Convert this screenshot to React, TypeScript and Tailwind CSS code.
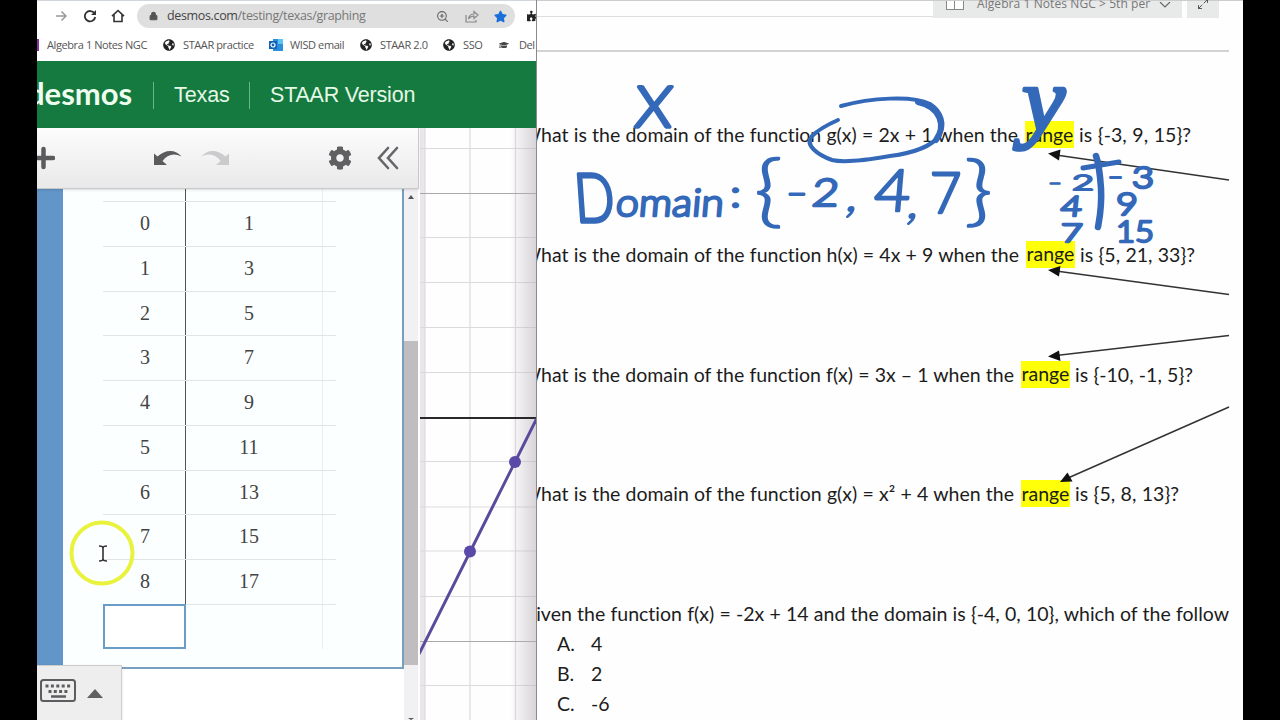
import type { ReactNode } from 'react'
import { Lock, Maximize2, ZoomIn } from 'lucide-react'
import { FaCog, FaGraduationCap, FaGlobeAmericas, FaPuzzlePiece, FaStar } from 'react-icons/fa'

const rows = [
  [0, 1],
  [1, 3],
  [2, 5],
  [3, 7],
  [4, 9],
  [5, 11],
  [6, 13],
  [7, 15],
  [8, 17],
]

interface Question {
  fn: ReactNode
  range: string
  before: string
  after: string
}

const questions: Question[] = [
  { fn: 'g(x) = 2x + 1', range: '{-3, 9, 15}?', before: 'w-[497px]', after: 'w-[112px]' },
  { fn: 'h(x) = 4x + 9', range: '{5, 21, 33}?', before: 'w-[498px]', after: 'w-[115px]' },
  { fn: 'f(x) = 3x – 1', range: '{-10, -1, 5}?', before: 'w-[493px]', after: 'w-[118px]' },
  { fn: 'g(x) = x² + 4', range: '{5, 8, 13}?', before: 'w-[493px]', after: 'w-[104px]' },
]

const answers = [
  ['A.', '4'],
  ['B.', '2'],
  ['C.', '-6'],
]

function BrowserBar() {
  return (
    <div className="h-[61px] shrink-0 border-t border-gray-300 bg-white font-['Open_Sans',sans-serif]">
      <div className="flex h-[30px] items-center">
        <svg className="ml-[18px] h-3 w-3 shrink-0" viewBox="0 0 12 12" fill="none" stroke="#999" strokeWidth="1.500">
          <path d="M1 6h10M6.500 1.500 11 6l-4.500 4.500" />
        </svg>
        <svg className="ml-4 h-[14px] w-[14px] shrink-0" viewBox="0 0 14 14" fill="none" stroke="#333" strokeWidth="1.800">
          <path d="M11.500 4.500A5.200 5.200 0 1 0 12.200 8" />
          <path d="M13 1v5H8z" fill="#333" stroke="none" />
        </svg>
        <svg className="ml-[14px] h-[14px] w-[14px] shrink-0" viewBox="0 0 14 14" fill="none" stroke="#333" strokeWidth="1.600">
          <path d="M1 7.200 7 1.500l6 5.700M3 6v6.500h8V6" />
        </svg>
        <div className="ml-3 flex h-6 w-[378px] shrink-0 items-center rounded-full bg-[#dfdfdf] pl-3">
          <Lock className="h-[10px] w-[9px] shrink-0 fill-[#555] text-[#555]" strokeWidth={3} />
          <span className="ml-[9px] w-[269px] shrink-0 text-[12.5px] tracking-[-0.350px] whitespace-nowrap text-[#777]">
            <span className="text-[#444]">desmos.com</span>/testing/texas/graphing
          </span>
          <ZoomIn className="h-[13px] w-[13px] shrink-0 text-[#666]" />
          <svg className="ml-4 h-[13px] w-[14px] shrink-0" viewBox="0 0 14 13" fill="none" stroke="#888" strokeWidth="1.200">
            <path d="M1 5v7h10v-2" />
            <path d="M3.500 9C4 5.500 6 4 9 4V1.500L13 5 9 8.500V6C7 6 5 7 3.500 9z" />
          </svg>
          <FaStar className="ml-[15px] h-[13px] w-[13px] shrink-0 text-[#1a6fd8]" />
        </div>
        <FaPuzzlePiece className="ml-3 h-3 w-3 shrink-0 text-[#222]" />
      </div>
      <div className="flex h-[28px] items-center text-[11px] tracking-[-0.400px] whitespace-nowrap text-[#555]">
        <span className="h-3 w-[2px] shrink-0 bg-[#8a2fa0]" />
        <span className="w-[124px] shrink-0 pl-2">Algebra 1 Notes NGC</span>
        <FaGlobeAmericas className="h-3 w-3 shrink-0 text-[#222]" />
        <span className="w-[94px] shrink-0 pl-2">STAAR practice</span>
        <svg className="h-[14px] w-[14px] shrink-0" viewBox="0 0 14 14">
          <rect x="4" y="1" width="10" height="12" fill="#2b8fdd" />
          <rect x="9" y="1" width="5" height="5" fill="#5cc3f5" />
          <rect x="0" y="3" width="8" height="8" fill="#0f62b5" />
          <circle cx="4" cy="7" r="2" fill="none" stroke="#fff" strokeWidth="1.200" />
        </svg>
        <span className="w-[77px] shrink-0 pl-[7px]">WISD email</span>
        <FaGlobeAmericas className="h-3 w-3 shrink-0 text-[#222]" />
        <span className="w-[71px] shrink-0 pl-2">STAAR 2.0</span>
        <FaGlobeAmericas className="h-3 w-3 shrink-0 text-[#222]" />
        <span className="w-[44px] shrink-0 pl-2">SSO</span>
        <FaGraduationCap className="h-[10px] w-[10px] shrink-0 text-[#444]" />
        <span className="pl-[10px]">Del</span>
      </div>
    </div>
  )
}

function DesmosHeader() {
  return (
    <div className="flex h-[67px] shrink-0 items-center bg-[#157a40] pt-px font-['Liberation_Sans',Arial,sans-serif] text-[21.500px] tracking-[-0.100px] whitespace-nowrap text-[#e6f8e6]">
      <span className="-mt-1 -ml-[10px] w-[106px] font-['Lato',sans-serif] text-[31px] font-bold tracking-normal text-[#effdef]">desmos</span>
      <span className="ml-5 h-[27px] w-px bg-[#6fb487]" />
      <span className="ml-5 w-[75px]">Texas</span>
      <span className="h-[27px] w-px bg-[#6fb487]" />
      <span className="ml-5 tracking-[-0.200px]">STAAR Version</span>
    </div>
  )
}

function Toolbar() {
  return (
    <div className="relative z-10 flex h-[61px] w-[382px] shrink-0 items-center border-r border-b border-[#c9c9c9] bg-linear-to-b from-[#fcfcfc] to-[#e9e9ea] shadow-sm">
      <svg className="h-6 w-[18px]" viewBox="0 0 18 24" stroke="#5b5b5e" strokeWidth="4.500" strokeLinecap="round">
        <path d="M6.500 3v18M-2 12h18" />
      </svg>
      <svg className="ml-[98px] h-4 w-[29px]" viewBox="0 0 29 16" fill="#5b5b5e">
        <path d="M1 15V3.500l3.500 3C12-1 23-1 28.500 6.500 21 2.500 14 4.500 9.500 11L14 15z" />
      </svg>
      <svg className="ml-[19px] h-4 w-[29px] -scale-x-100" viewBox="0 0 29 16" fill="#cbcbcd">
        <path d="M1 15V3.500l3.500 3C12-1 23-1 28.500 6.500 21 2.500 14 4.500 9.500 11L14 15z" />
      </svg>
      <FaCog className="ml-[98px] h-6 w-6 text-[#606063]" />
      <svg className="ml-[25px] h-6 w-[22px]" viewBox="0 0 22 24" fill="none" stroke="#66666a" strokeWidth="2.600" strokeLinecap="round">
        <path d="M11 2 2 12l9 10M20 2l-9 10 9 10" />
      </svg>
    </div>
  )
}

function ValueTable() {
  return (
    <div className="flex h-[480px] w-[367px] shrink-0 border-r-2 border-b-2 border-[#779fc0] bg-[#fcffff]">
      <div className="w-[26px] shrink-0 bg-[#6296c9]" />
      <div className="ml-10 w-[233px] font-['Liberation_Serif',serif] text-[20px] text-[#444]">
        <div className="flex h-3">
          <div className="w-[83px] border-r-[1.500px] border-[#555]" />
          <div className="w-[137px] border-r border-[#e9eeee]" />
        </div>
        {rows.map(([x, y]) => (
          <div key={x} className="flex h-[44.750px] border-t border-[#e2e5e5] leading-[43px]">
            <div className="w-[83px] border-r-[1.500px] border-[#555] pl-[2px] text-center">{x}</div>
            <div className="w-[137px] border-r border-[#e9eeee] pr-[10px] text-center">{y}</div>
          </div>
        ))}
        <div className="flex h-[45px] border-t border-[#e2e5e5]">
          <div className="-mt-px h-[45px] w-[83px] border-2 border-[#6a9cc8] bg-white" />
          <div className="w-[137px] border-r border-[#e9eeee]" />
        </div>
      </div>
    </div>
  )
}

function Scrollbar() {
  return (
    <div className="flex w-[14px] flex-col items-center bg-[#f1f0f2]">
      <span className="mt-[6px] border-x-[3px] border-b-4 border-x-transparent border-b-[#555]" />
      <div className="mt-[142px] h-[324px] w-full bg-[#bfbdc0]" />
      <div className="grow" />
      <span className="border-x-[3px] border-t-2 border-x-transparent border-t-[#555]" />
    </div>
  )
}

function Graph() {
  return (
    <svg className="absolute top-32 right-0 h-[592px] w-[116px]" viewBox="420 128 116 592">
      <defs>
        <linearGradient id="edge">
          <stop offset="0" stopColor="#b9b2b9" stopOpacity="0" />
          <stop offset="1" stopColor="#b9b2b9" stopOpacity="0.550" />
        </linearGradient>
      </defs>
      <rect x="420" y="128" width="116" height="592" fill="#fefefe" />
      <rect x="420" y="128" width="5" height="592" fill="#e9e7ea" />
      {[425, 470, 515.5].map(x => (
        <path key={x} d={`M${x} 128V720`} stroke="#dddadd" strokeWidth="1.200" />
      ))}
      {[148.5, 237.5, 282.5, 327.5, 372.5, 461.5, 507, 551, 596.5, 685.5].map(y => (
        <path key={y} d={`M420 ${y}H536`} stroke="#dddadd" strokeWidth="1.200" />
      ))}
      <path d="M420 193.500H536M420 641.500H536" stroke="#a9a7a9" strokeWidth="1.200" />
      <rect x="510" y="128" width="26" height="592" fill="url(#edge)" />
      <path d="M420 418H536" stroke="#29292b" strokeWidth="2" />
      <path d="M419 654 536.500 419" stroke="#5a4a9c" strokeWidth="3" />
      <circle cx="470" cy="551.500" r="6" fill="#5a49a6" />
      <circle cx="515" cy="462" r="6" fill="#5a49a6" />
    </svg>
  )
}

function Browser() {
  return (
    <div className="relative flex h-full w-[499px] shrink-0 flex-col overflow-hidden bg-white">
      <BrowserBar />
      <DesmosHeader />
      <Toolbar />
      <div className="flex grow">
        <ValueTable />
        <Scrollbar />
      </div>
      <Graph />
      <div className="absolute bottom-0 left-0 z-10 flex h-[55px] w-[85px] items-center border-t border-r border-[#ccc] bg-[#eeeeef] pb-1 shadow">
        <svg className="ml-[3px] h-6 w-9" viewBox="0 0 36 24" fill="none" stroke="#5d5d60" strokeWidth="2">
          <rect x="1" y="1" width="34" height="21" rx="2.500" />
          <path d="M5.500 7h25" strokeWidth="3" strokeDasharray="3 2.400" />
          <path d="M8.500 12.500h19" strokeWidth="3" strokeDasharray="3 2.300" />
          <path d="M11 17.500h15" strokeWidth="2.500" />
        </svg>
        <span className="mt-1 ml-[11px] border-x-8 border-b-[9px] border-x-transparent border-b-[#606063]" />
      </div>
      <svg className="absolute top-[518px] left-8 h-[68px] w-[68px]" viewBox="0 0 68 68" fill="none">
        <circle cx="33" cy="35" r="30.500" stroke="#e9f23c" strokeWidth="4" />
        <path d="M30 28q4 0 4 2v11q0 2-4 2M38 28q-4 0-4 2v11q0 2 4 2" stroke="#333" strokeWidth="1.600" />
      </svg>
    </div>
  )
}

interface InkProps {
  x: number
  base: number
  size: number
  width: number
  weight?: number
  tilt?: number
  className?: string
  children: string
}

// A word in marker pen: thin type thickened with a round stroke.
function Ink({ x, base, size, width, weight = 3.5, tilt = 0, className, children }: InkProps) {
  return (
    <text
      className={className}
      transform={`translate(${x} ${base}) skewX(${tilt})`}
      fontSize={size}
      textLength={width}
      lengthAdjust="spacingAndGlyphs"
      strokeWidth={weight}
    >
      {children}
    </text>
  )
}

function InkLayer() {
  return (
    <svg
      className="absolute inset-y-0 -left-px h-[720px] w-[706px] font-['Lato',sans-serif] font-light"
      viewBox="536 0 706 720"
      fill="#3468b8"
      stroke="#3468b8"
      strokeLinecap="round"
      strokeLinejoin="round"
    >
      <Ink x={634} base={127} size={57} width={37} tilt={-4}>X</Ink>
      <Ink x={1022} base={131} size={92} width={43} weight={3.5} className="font-['Liberation_Serif',serif] italic">y</Ink>
      <Ink x={576} base={222} size={68} width={40} tilt={4}>D</Ink>
      <Ink x={615} base={216} size={38} width={108} weight={2.5} tilt={-5}>omain</Ink>
      <Ink x={730} base={207} size={37} width={11} weight={2.5}>:</Ink>
      <Ink x={754} base={218} size={78} width={29} weight={1.5}>{'{'}</Ink>
      <Ink x={786} base={206} size={40} width={22} weight={2}>-</Ink>
      <Ink x={811} base={206} size={38} width={27} weight={2.5} tilt={-5}>2</Ink>
      <Ink x={844} base={211} size={50} width={13} weight={1.5} tilt={-12}>,</Ink>
      <Ink x={873} base={211} size={58} width={36} weight={2.5} tilt={-5}>4</Ink>
      <Ink x={905} base={218} size={50} width={13} weight={1.5} tilt={-12}>,</Ink>
      <Ink x={931} base={213} size={57} width={32} weight={2.5} tilt={2}>7</Ink>
      <Ink x={964} base={217} size={76} width={29} weight={1.5}>{'}'}</Ink>
      <Ink x={1048} base={191} size={24} width={14} weight={1.5}>-</Ink>
      <Ink x={1072} base={190} size={22} width={22} weight={2}>2</Ink>
      <Ink x={1108} base={185} size={24} width={15} weight={2}>-</Ink>
      <Ink x={1132} base={188} size={29} width={22} weight={2.5}>3</Ink>
      <Ink x={1060} base={216} size={28} width={21} weight={2.5} tilt={-6}>4</Ink>
      <Ink x={1116} base={215} size={31} width={22} weight={2.5}>9</Ink>
      <Ink x={1061} base={242} size={26} width={22} weight={2.5}>7</Ink>
      <Ink x={1116} base={242} size={29} width={38} weight={2.5}>15</Ink>
      <g fill="none">
        <path d="M838 120C829 124 819 129 812 136 804 145 818 155 832 160 844 163 873 159 890 156 913 153 932 146 939 136 946 124 942 112 930 104 912 95 870 98 841 106" strokeWidth="4" />
        <path d="M936 140C946 126 941 107 918 102" strokeWidth="6" />
        <path d="M1096 156C1099 164 1100 174 1101 188 1102 207 1100 216 1098 227" strokeWidth="6.500" />
        <path d="M1083 168 1119 162" strokeWidth="5" />
      </g>
    </svg>
  )
}

// Printed arrows pointing at each highlighted word.
function Arrows() {
  return (
    <svg className="absolute inset-y-0 -left-px h-[720px] w-[706px]" viewBox="536 0 706 720" fill="#111">
      <g stroke="#333" strokeWidth="1.500">
        <path d="M1056 155 1229 180" />
        <path d="M1056 271 1229 294.500" />
        <path d="M1056 355.500 1229 335.500" />
        <path d="M1068 478 1229 407" />
      </g>
      <path d="M1048 153.500 1060.500 149.500 1059 160.500z" />
      <path d="M1048 270 1060.500 266 1059 276.500z" />
      <path d="M1048 356.500 1059 350.500 1060.500 361z" />
      <path d="M1060 482 1067.500 472.500 1072.500 481.500z" />
    </svg>
  )
}

function Notes() {
  return (
    <div className="relative h-full w-[707px] shrink-0 overflow-hidden border-l border-[#8f878d] bg-[#fefefe] font-['Lato',sans-serif] text-[#1c1c1c]">
      <div className="flex h-[18px] justify-end border-t border-[#ccc] pr-6 font-['Open_Sans',sans-serif] text-[12px] text-[#777]">
        <div className="mb-px grow border-b border-[#dedede]" />
        <div className="flex w-[249px] bg-[#e8e9e9]">
          <span className="ml-[13px] flex h-[9px] w-[18px] border border-t-0 border-[#888] bg-white">
            <span className="w-2 border-r border-[#888]" />
          </span>
          <span className="-mt-[6px] ml-[13px] w-[176px] tracking-[0.080px] whitespace-nowrap">Algebra 1 Notes NGC &gt; 5th per</span>
          <svg className="mt-px ml-[6px] h-[6px] w-3" viewBox="0 0 12 6" fill="none" stroke="#666" strokeWidth="1.200">
            <path d="m1 0 5 5 5-5" />
          </svg>
        </div>
        <div className="ml-[5px] flex w-8 justify-center bg-[#e8e9e9]">
          <Maximize2 className="-mt-[3px] h-3 w-3 text-[#555]" strokeWidth={2} />
        </div>
      </div>
      <div className="mt-8 h-[2px] w-[692px] bg-[#d3d3d3]" />
      <div className="mt-[68px] w-[692.500px] overflow-hidden text-[19.500px] leading-[30px] whitespace-nowrap [font-variant-ligatures:none]">
        {questions.map((q, i) => (
          <div key={i} className="-ml-4 flex h-[119.750px]">
            <div className={`${q.before} [text-align-last:justify]`}>What is the domain of the function {q.fn} when the</div>
            <div className="mt-px ml-[7px] flex h-[27px] w-[49px] items-center justify-center self-start bg-[#ffff0a]">range</div>
            <div className={`${q.after} ml-[5px] [text-align-last:justify]`}>is {q.range}</div>
          </div>
        ))}
        <div className="-ml-[15px] h-[30px] w-[707px] [text-align-last:justify]">
          Given the function f(x) = -2x + 14 and the domain is {'{-4, 0, 10}'}, which of the follow
        </div>
        {answers.map(([letter, value]) => (
          <div key={letter} className="flex h-[30px] pl-5">
            <span className="w-[34px]">{letter}</span>
            <span>{value}</span>
          </div>
        ))}
      </div>
      <Arrows />
      <InkLayer />
    </div>
  )
}

export default function App() {
  return (
    <div className="flex h-[720px] w-[1280px] overflow-hidden bg-black pl-[37px]">
      <Browser />
      <Notes />
    </div>
  )
}
